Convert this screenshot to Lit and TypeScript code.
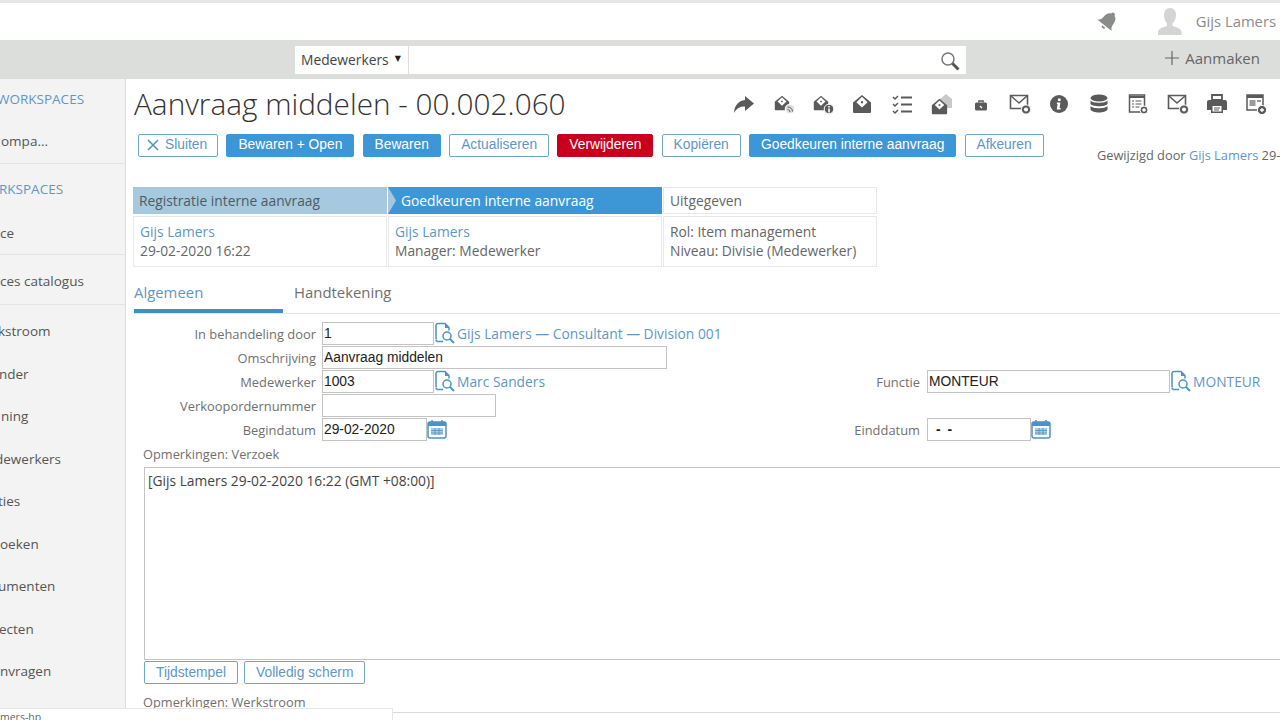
import { LitElement, html, css, svg } from "lit";
import { customElement } from "lit/decorators.js";

const DARK = "#5a5a5a";

// open envelope with a diamond on the flap, used by several toolbar icons
const envelope = (x: number, y: number, s: number) => svg`
  <g transform="translate(${x} ${y}) scale(${s})">
    <path d="M1 8.500 10 1l9 7.500V18a1 1 0 0 1-1 1H2a1 1 0 0 1-1-1z" fill="${DARK}"/>
    <path d="M10 2.800l5.600 5.400L10 13.500 4.400 8.200z" fill="#fff"/>
    <path d="M9 7.200h2v2H9z" fill="${DARK}"/>
  </g>`;

const badge = (cx: number, cy: number, r: number, inner: string) => svg`
  <circle cx="${cx}" cy="${cy}" r="${r}" fill="${inner}" stroke="#fff" stroke-width="1"/>
  <circle cx="${cx}" cy="${cy}" r="${r * 0.45}" fill="#fff"/>`;

const mailOutline = svg`
  <path d="M2.500 3.500h17v13h-17z" fill="#fff" stroke="${DARK}" stroke-width="1.600"/>
  <path d="M3 4l8 7 8-7" fill="none" stroke="${DARK}" stroke-width="1.500"/>
  ${badge(18, 17.500, 4.600, DARK)}`;

const toolbarIcons = [
  svg`<path d="M13 4l9 7.500-9 7.500v-4.600c-5 0-8.200 1.500-11 6.600.4-7.600 4.500-12.300 11-13z" fill="${DARK}"/>`,
  svg`${envelope(2, 3, 0.8)}<circle cx="18" cy="17" r="4.800" fill="#ddd" stroke="#fff"/><path d="M15.500 15c3 0 5 2 5 4.500M15.500 17.500c1.500 0 2.500 1 2.500 2.500" stroke="${DARK}" fill="none"/>`,
  svg`${envelope(2, 3, 0.8)}<circle cx="18" cy="17" r="4.800" fill="${DARK}" stroke="#fff"/><path d="M17.200 14h1.600v1.600h-1.600zM17.200 16.500h1.600v4h-1.600z" fill="#fff"/>`,
  svg`${envelope(2, 2, 1)}`,
  svg`<path d="M3 5l2 2 3-3M3 12l2 2 3-3M3 19l2 2 3-3" fill="none" stroke="${DARK}" stroke-width="1.500"/><path d="M11 5.500h11M11 12.500h11M11 19.500h11" stroke="${DARK}" stroke-width="2"/>`,
  svg`<path d="M10 8l7-6 6 5v9h-6z" fill="#c9c9c9"/>${envelope(2, 6, 0.85)}`,
  svg`<path d="M9.800 10.500V9h4.400v1.500" fill="none" stroke="${DARK}" stroke-width="1.300"/><rect x="6" y="10.500" width="12" height="8" rx="1.500" fill="${DARK}"/><path d="M11 14l2 2" stroke="#fff" stroke-width="1.300"/>`,
  mailOutline,
  svg`<circle cx="12" cy="12" r="9" fill="${DARK}"/><path d="M11 6.500h2.600v2.500H11zM10 10.500h3.400l-.8 5.500h1v1.500H9.800l.8-5.500h-.8z" fill="#fff"/>`,
  svg`<ellipse cx="12" cy="6" rx="8.500" ry="3.500" fill="${DARK}"/><path d="M3.500 8.500c2 3 15 3 17 0v3.500c-2 3-15 3-17 0zM3.500 14c2 3 15 3 17 0v3.500c-2 4-15 4-17 0z" fill="${DARK}"/>`,
  svg`<rect x="3.500" y="3" width="15" height="17" fill="#fff" stroke="${DARK}" stroke-width="1.500"/><path d="M3.500 4h15v2h-15z" fill="${DARK}"/><path d="M6 9h2M9.500 9h6M6 12h2M9.500 12h6M6 15h2M9.500 15h4" stroke="${DARK}" stroke-width="1.200"/>${badge(18, 18, 4, DARK)}`,
  mailOutline,
  svg`<path d="M7 3h10v5H7z" fill="#fff" stroke="${DARK}" stroke-width="1.800"/><path d="M4 8h16a2 2 0 0 1 2 2v8h-4v3H6v-3H2v-8a2 2 0 0 1 2-2z" fill="${DARK}"/><path d="M7.500 14h9v5.500h-9z" fill="#fff"/><path d="M9 16h6M9 18h5" stroke="${DARK}"/>`,
  svg`<rect x="3" y="3" width="16" height="15" fill="#fff" stroke="${DARK}" stroke-width="1.500"/><path d="M3 3h16v3H3z" fill="${DARK}"/><path d="M5.500 8h6v6h-6z" fill="#9a9a9a"/><path d="M13 8h4v2h-4z" fill="#9a9a9a"/><circle cx="18" cy="18" r="4.600" fill="${DARK}" stroke="#fff"/><path d="M16 18h4M18 16v4" stroke="#fff" stroke-width="1.300"/>`,
];

const sideGroups = [
  {
    pad: "0",
    items: [
      { t: "WORKSPACES", head: true, h: 40, x: -3 },
      { t: "ompa...", h: 44, x: 1 },
    ],
  },
  {
    pad: "0 0 2px",
    items: [
      { t: "RKSPACES", head: true, h: 50, x: -1 },
      { t: "ce", h: 38, x: 0 },
    ],
  },
  { pad: "2px 0 0", items: [{ t: "ces catalogus", h: 47, x: 0 }] },
  {
    pad: "5px 0 0",
    items: [
      { t: "kstroom", h: 42.5, x: -2 },
      { t: "nder", h: 42.5, x: -1 },
      { t: "ning", h: 42.5, x: 1 },
      { t: "dewerkers", h: 42.5, x: -5 },
      { t: "ties", h: 42.5, x: -2 },
      { t: "oeken", h: 42.5, x: 0 },
      { t: "umenten", h: 42.5, x: -2 },
      { t: "ecten", h: 42.5, x: -1 },
      { t: "nvragen", h: 42.5, x: 0 },
    ],
  },
];

@customElement("app-root")
export class AppRoot extends LitElement {
  static styles = css`
    :host {
      display: flex;
      flex-direction: column;
      position: relative;
      width: 1280px;
      height: 720px;
      overflow: hidden;
      background: #fff;
      font-family: "Open Sans", sans-serif;
      font-size: 13.8px;
      color: #666;
    }
    a {
      color: #5f97c4;
      text-decoration: none;
    }
    .top {
      height: 35px;
      padding: 0 4px 2px 0;
      border-top: 3px solid #e6e7e5;
      display: flex;
      align-items: center;
      justify-content: flex-end;
      color: #8c8c8c;
      font-size: 14.8px;
      flex: none;
    }
    .bell {
      margin-right: 35px;
    }
    .user {
      margin-right: 11px;
    }
    .searchbar {
      height: 39px;
      flex: none;
      background: #dcdedc;
      display: flex;
      align-items: center;
      padding: 0 20px 0 295px;
      box-sizing: border-box;
    }
    .select {
      width: 113px;
      height: 28px;
      background: #fff;
      color: #444;
      display: flex;
      align-items: center;
      padding-left: 6px;
      box-sizing: border-box;
      gap: 6px;
    }
    .caret {
      font-size: 8px;
      color: #222;
      font-family: "DejaVu Sans", sans-serif;
      margin-top: -3px;
    }
    .search {
      width: 557px;
      height: 28px;
      margin-left: 1px;
      background: #fff;
      display: flex;
      align-items: center;
      justify-content: flex-end;
      padding: 2px 4px 0 0;
      box-sizing: border-box;
    }
    .create {
      margin-left: auto;
      display: flex;
      align-items: center;
      gap: 5px;
      color: #666;
      font-size: 15px;
      margin-top: -4px;
    }
    .body {
      flex: 1;
      display: flex;
      min-height: 0;
    }
    .side {
      width: 126px;
      flex: none;
      box-sizing: border-box;
      background: #f3f3f3;
      border-right: 1px solid #dcdcdc;
      white-space: nowrap;
      overflow: hidden;
      font-size: 13.5px;
    }
    .group {
      border-bottom: 1px solid #e3e3e3;
    }
    .group:last-child {
      border-bottom: none;
    }
    .item {
      display: flex;
      align-items: center;
      color: #555;
    }
    .item.head {
      color: #5f97c4;
    }
    main {
      flex: 1;
      min-width: 0;
      padding-left: 8px;
      overflow: hidden;
    }
    .titlerow {
      height: 55px;
      box-sizing: border-box;
      padding: 0 4px 6px 0;
      display: flex;
      align-items: center;
      justify-content: space-between;
    }
    h1 {
      margin: 0;
      font-size: 29.75px;
      font-weight: 300;
      color: #333;
      white-space: nowrap;
    }
    .tools {
      display: flex;
      margin-top: 1px;
    }
    .tool {
      width: 39.4px;
      display: flex;
      justify-content: center;
    }
    .actions {
      display: flex;
      gap: 8.2px;
      padding-left: 4px;
      height: 23px;
      white-space: nowrap;
    }
    button {
      font-family: "Liberation Sans", sans-serif;
      font-size: 13.8px;
      height: 23px;
      padding: 0 11px 2px;
      border-radius: 2px;
      border: 1px solid #3d97d6;
      background: #3d97d6;
      color: #fff;
      display: flex;
      align-items: center;
      gap: 6px;
      box-sizing: border-box;
    }
    button.line {
      background: #fff;
      border-color: #6fa6cc;
      color: #5f97c4;
    }
    button.close {
      padding-left: 8px;
      padding-right: 10px;
    }
    button.red {
      background: #c8001e;
      border-color: #c8001e;
    }
    .changed {
      margin: 12px 0 0 45px;
      font-size: 12.8px;
    }
    .steps {
      display: grid;
      grid-template-columns: 254px 274px 214px;
      grid-template-rows: 27px 51px;
      gap: 2px 1px;
      margin: 30px 0 0 -1px;
      width: 744px;
    }
    .step {
      padding-left: 6px;
      display: flex;
      align-items: center;
      box-sizing: border-box;
    }
    .step.done {
      background: #a6c9e0;
      color: #4f5b63;
    }
    .step.now {
      background: #3d97d6;
      color: #fff;
      padding-left: 13px;
      position: relative;
    }
    .notch {
      position: absolute;
      left: 0;
      top: 0;
    }
    .step.todo {
      border: 1px solid #e8e8e8;
      color: #666;
    }
    .detail {
      border: 1px solid #e8e8e8;
      padding: 5px 6px;
      line-height: 19px;
      box-sizing: border-box;
      white-space: nowrap;
    }
    .tabs {
      display: flex;
      height: 28px;
      margin-top: 18px;
      border-bottom: 1px solid #e5e5e5;
      font-size: 14.9px;
    }
    .tab {
      width: 149px;
      box-sizing: border-box;
      color: #5f97c4;
      border-bottom: 4px solid #3d8fc4;
      height: 28px;
      margin-right: 11px;
      line-height: 14px;
    }
    .tab.off {
      color: #6f6f6f;
      border: none;
    }
    .form {
      padding-top: 7px;
    }
    .row {
      display: flex;
      align-items: center;
      height: 24px;
    }
    .lab {
      width: 182px;
      text-align: right;
      margin-right: 6px;
      padding-top: 2px;
      font-size: 12.9px;
      color: #707070;
      white-space: nowrap;
      flex: none;
    }
    .input {
      height: 23px;
      box-sizing: border-box;
      border: 1px solid #c4c4c4;
      font-family: "Liberation Sans", sans-serif;
      font-size: 13.8px;
      color: #222;
      padding-left: 1px;
      display: flex;
      align-items: center;
      flex: none;
      background: #fff;
    }
    .input.date-empty {
      padding-left: 8px;
      word-spacing: 3px;
      font-weight: bold;
    }
    .w-code {
      width: 112px;
    }
    .w-text {
      width: 345px;
    }
    .w-order {
      width: 174px;
    }
    .w-date {
      width: 105px;
    }
    .w-end {
      width: 104px;
    }
    .w-func {
      width: 243px;
    }
    .lookup {
      display: flex;
      align-items: center;
      gap: 1px;
      white-space: nowrap;
    }
    .cal {
      flex: none;
    }
    .rightcell {
      margin-left: auto;
      display: flex;
      align-items: center;
      width: 435px;
    }
    .rightcell .lab {
      width: 75px;
      margin-right: 7px;
    }
    .note-label {
      font-size: 12.8px;
      color: #707070;
      margin: 3px 0 0 9px;
      height: 20px;
      line-height: 20px;
    }
    .area {
      margin: 3px 0 0 10px;
      height: 193px;
      border: 1px solid #c4c4c4;
      border-right: none;
      box-sizing: border-box;
      color: #444;
      padding: 3px 3px;
    }
    .area-actions {
      display: flex;
      gap: 6px;
      margin: 1px 0 0 10px;
    }
    .area-actions button {
      padding-bottom: 0;
    }
    .note-label.second {
      margin-top: 8px;
      border-bottom: 1px solid #dcdcdc;
    }
    .status {
      position: absolute;
      left: 0;
      bottom: 0;
      width: 393px;
      height: 12px;
      background: #fff;
      border: 1px solid #e6e6e6;
      border-left: none;
      border-bottom: none;
      box-sizing: border-box;
      font-size: 10.5px;
      line-height: 16px;
      overflow: hidden;
      color: #666;
    }
  `;

  private lookupIcon() {
    return html`<svg width="22" height="22" viewBox="0 0 22 22">
      <path d="M2 17V3.500a2 2 0 0 1 2-2h7l4 4v3M9 19.500H4a2 2 0 0 1-2-2" fill="none" stroke="#4b93c6" stroke-width="1.500"/>
      <path d="M11 1.500v4.500h4z" fill="#4b93c6"/>
      <circle cx="13" cy="14" r="4" fill="none" stroke="#4b93c6" stroke-width="1.500"/>
      <path d="M16 17l4 4" stroke="#4b93c6" stroke-width="2"/>
    </svg>`;
  }

  private calendarIcon() {
    return html`<svg class="cal" width="20" height="20" viewBox="0 0 20 20">
      <rect x="1" y="3" width="18" height="16" rx="2" fill="#fff" stroke="#4b93c6" stroke-width="1.500"/>
      <path d="M1 3h18v4H1z" fill="#4b93c6"/>
      <path d="M5 1v4M15 1v4" stroke="#4b93c6" stroke-width="1.500"/>
      <path d="M4 9h12v7H4z" fill="#a9cde6"/>
      <path d="M4 11.500h12M4 14h12M8 9v7M12 9v7" stroke="#4b93c6" stroke-width=".8"/>
    </svg>`;
  }

  render() {
    return html`
      <div class="top">
        <svg class="bell" width="24" height="24" viewBox="0 0 24 24">
          <g transform="rotate(38 12 12)">
            <path d="M12 2a2 2 0 0 1 2 2c3 1 4 4 4 7 0 3 1 5 3 6.500H3C5 16 6 14 6 11c0-3 1-6 4-7a2 2 0 0 1 2-2z" fill="#8a8c8a"/>
            <path d="M10 19h4a2 2 0 0 1-4 0z" fill="#8a8c8a"/>
          </g>
        </svg>
        <svg class="user" width="30" height="30" viewBox="0 0 30 30">
          <path d="M15 2c4 0 6 3 6 7s-2 7-3.500 8.500V20c3 1 8 2 9 5.500V29H3v-3.500c1-3.500 6-4.500 9-5.500v-2.500C10.500 16 9 13 9 9s2-7 6-7z" fill="#d4d4d4"/>
        </svg>
        <span>Gijs Lamers</span>
      </div>
      <div class="searchbar">
        <div class="select">Medewerkers <span class="caret">▼</span></div>
        <div class="search">
          <svg width="24" height="24" viewBox="0 0 24 24">
            <circle cx="10" cy="10" r="6" fill="none" stroke="#777" stroke-width="1.500"/>
            <path d="M14.500 14.500l6 6" stroke="#555" stroke-width="3"/>
          </svg>
        </div>
        <div class="create">
          <svg width="16" height="16" viewBox="0 0 16 16"><path d="M8 1v14M1 8h14" stroke="#666" stroke-width="1.200"/></svg>
          Aanmaken
        </div>
      </div>
      <div class="body">
        <nav class="side">
          ${sideGroups.map(
            (g) => html`<div class="group" style="padding:${g.pad}">
              ${g.items.map(
                (i: any) => html`<div class="item ${i.head ? "head" : ""}" style="height:${i.h}px;margin-left:${i.x}px">${i.t}</div>`
              )}
            </div>`
          )}
        </nav>
        <main>
          <div class="titlerow">
            <h1>Aanvraag middelen - 00.002.060</h1>
            <div class="tools">
              ${toolbarIcons.map(
                (ic) => html`<div class="tool"><svg width="24" height="24" viewBox="0 0 24 24">${ic}</svg></div>`
              )}
            </div>
          </div>
          <div class="actions">
            <button class="line close">
              <svg width="12" height="12" viewBox="0 0 12 12"><path d="M1 1l10 10M11 1L1 11" stroke="#4b93c6" stroke-width="1.500"/></svg>
              Sluiten
            </button>
            <button>Bewaren + Open</button>
            <button>Bewaren</button>
            <button class="line">Actualiseren</button>
            <button class="red">Verwijderen</button>
            <button class="line">Kopiëren</button>
            <button>Goedkeuren interne aanvraag</button>
            <button class="line">Afkeuren</button>
            <div class="changed">Gewijzigd door <a>Gijs Lamers</a> 29-02-2020</div>
          </div>
          <div class="steps">
            <div class="step done">Registratie interne aanvraag</div>
            <div class="step now">
              <svg class="notch" width="9" height="27" viewBox="0 0 9 27"><path d="M0 0l8 13.500L0 27z" fill="#a6c9e0"/></svg>
              Goedkeuren interne aanvraag
            </div>
            <div class="step todo">Uitgegeven</div>
            <div class="detail"><a>Gijs Lamers</a><br />29-02-2020 16:22</div>
            <div class="detail"><a>Gijs Lamers</a><br />Manager: Medewerker</div>
            <div class="detail">Rol: Item management<br />Niveau: Divisie (Medewerker)</div>
          </div>
          <div class="tabs">
            <div class="tab">Algemeen</div>
            <div class="tab off">Handtekening</div>
          </div>
          <div class="form">
            <div class="row">
              <div class="lab">In behandeling door</div>
              <div class="input w-code">1</div>
              <a class="lookup">${this.lookupIcon()} Gijs Lamers — Consultant — Division 001</a>
            </div>
            <div class="row">
              <div class="lab">Omschrijving</div>
              <div class="input w-text">Aanvraag middelen</div>
            </div>
            <div class="row">
              <div class="lab">Medewerker</div>
              <div class="input w-code">1003</div>
              <a class="lookup">${this.lookupIcon()} Marc Sanders</a>
              <div class="rightcell">
                <div class="lab">Functie</div>
                <div class="input w-func">MONTEUR</div>
                <a class="lookup">${this.lookupIcon()} MONTEUR</a>
              </div>
            </div>
            <div class="row">
              <div class="lab">Verkoopordernummer</div>
              <div class="input w-order"></div>
            </div>
            <div class="row">
              <div class="lab">Begindatum</div>
              <div class="input w-date">29-02-2020</div>
              ${this.calendarIcon()}
              <div class="rightcell">
                <div class="lab">Einddatum</div>
                <div class="input w-end date-empty">- -</div>
                ${this.calendarIcon()}
              </div>
            </div>
            <div class="note-label">Opmerkingen: Verzoek</div>
            <div class="area">[Gijs Lamers 29-02-2020 16:22 (GMT +08:00)]</div>
            <div class="area-actions">
              <button class="line">Tijdstempel</button>
              <button class="line">Volledig scherm</button>
            </div>
            <div class="note-label second">Opmerkingen: Werkstroom</div>
          </div>
        </main>
      </div>
      <div class="status">mers-hp</div>
    `;
  }
}
